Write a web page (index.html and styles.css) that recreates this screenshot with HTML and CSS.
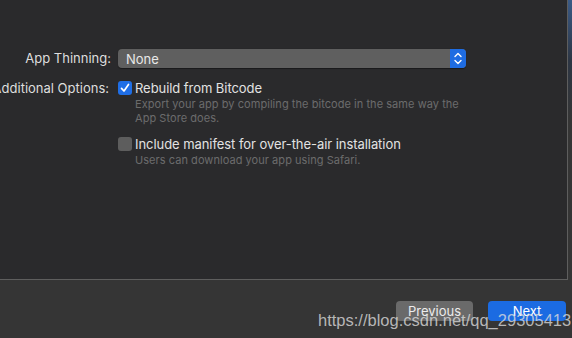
FILE: index.html
```html
<!DOCTYPE html>
<html>
<head>
<meta charset="utf-8">
<link rel="stylesheet" href="styles.css">
</head>
<body>
<div class="window">
  <div class="main">
    <div class="panel">
      <div class="row row-popup">
        <div class="label">App Thinning:</div>
        <div class="popup">
          <span class="popup-text">None</span>
          <span class="stepper">
            <svg width="16" height="19" viewBox="0 0 16 19"><path d="M5 7.5 L8 4.5 L11 7.5 M5 11.5 L8 14.5 L11 11.5" fill="none" stroke="#fff" stroke-width="1.4" stroke-linecap="round" stroke-linejoin="round"/></svg>
          </span>
        </div>
      </div>
      <div class="row row-options">
        <div class="label">Additional Options:</div>
        <div class="options">
          <div class="option">
            <div class="check-line">
              <span class="checkbox checked">
                <svg width="14" height="14" viewBox="0 0 14 14"><path d="M3.5 7.3 L6 10 L10.5 3.5" fill="none" stroke="#fff" stroke-width="1.7" stroke-linecap="round" stroke-linejoin="round"/></svg>
              </span>
              <span class="check-text">Rebuild from Bitcode</span>
            </div>
            <div class="desc">Export your app by compiling the bitcode in the same way the<br>App Store does.</div>
          </div>
          <div class="option">
            <div class="check-line">
              <span class="checkbox"></span>
              <span class="check-text">Include manifest for over-the-air installation</span>
            </div>
            <div class="desc">Users can download your app using Safari.</div>
          </div>
        </div>
      </div>
    </div>
    <div class="edge"></div>
  </div>
  <div class="footer">
    <button class="btn btn-prev">Previous</button>
    <button class="btn btn-next">Next</button>
  </div>
  <div class="watermark">https://blog.csdn.net/qq_29305413</div>
</div>
</body>
</html>
```
FILE: styles.css
```css
html, body {
  margin: 0;
  padding: 0;
  background: #353535;
}
.window {
  position: relative;
  width: 572px;
  height: 338px;
  overflow: hidden;
  font-family: Inter, "Liberation Sans", sans-serif;
  color: #dcdcdc;
}
.main {
  display: flex;
  height: 280px;
}
.panel {
  width: 568px;
  height: 280px;
  box-sizing: border-box;
  background: #2a2a2c;
  border-right: 1px solid #5e5e5e;
  border-bottom: 1px solid #5e5e5e;
  padding-top: 49px;
}
.edge {
  flex: 1;
  background: linear-gradient(#3a5a86, #2d3644 60px, #353535 120px);
}
.row {
  display: flex;
  gap: 7px;
}
.label {
  width: 111px;
  flex: none;
  display: flex;
  justify-content: flex-end;
  white-space: nowrap;
  font-size: 13px;
  line-height: 19px;
  color: #dedede;
}
.row-options {
  margin-top: 12px;
}
.row-options .label {
  line-height: 16px;
  width: 109px;
  margin-right: 2px;
}
.popup {
  width: 348px;
  height: 19px;
  background: #5f5f5f;
  border-radius: 4px;
  display: flex;
  align-items: center;
  justify-content: space-between;
  box-shadow: 0 0.5px 1px rgba(0,0,0,0.4);
}
.popup-text {
  padding-left: 8px;
  font-size: 13px;
  color: #e8e8e8;
}
.stepper {
  width: 16px;
  height: 19px;
  background: #1e6ce2;
  border-radius: 0 4px 4px 0;
  display: flex;
}
.options {
  display: flex;
  flex-direction: column;
  gap: 11px;
}
.check-line {
  display: flex;
  align-items: center;
  gap: 3px;
  height: 16px;
}
.checkbox {
  width: 14px;
  height: 14px;
  border-radius: 3px;
  background: #5d5d5d;
  display: flex;
  box-sizing: border-box;
}
.checkbox.checked {
  background: #1f6ee6;
}
.check-text {
  font-size: 13px;
  letter-spacing: -0.06px;
  color: #e2e2e2;
  white-space: nowrap;
}
.desc {
  padding-top: 1px;
  padding-left: 17px;
  font-size: 11px;
  letter-spacing: 0.05px;
  line-height: 14px;
  color: #6c6c6c;
  white-space: nowrap;
}
.footer {
  display: flex;
  justify-content: flex-end;
  gap: 15px;
  padding-top: 21px;
  padding-right: 6px;
}
.btn {
  height: 20px;
  border: none;
  border-radius: 4px;
  font-family: Inter, "Liberation Sans", sans-serif;
  font-size: 13px;
  color: #ececec;
  padding: 0;
}
.btn-prev {
  width: 77px;
  background: #6a6a6a;
}
.btn-next {
  width: 78px;
  background: #1b6be2;
  color: #fff;
}
.watermark {
  position: absolute;
  left: 318px;
  top: 310px;
  font-family: "Liberation Sans", Arial, sans-serif;
  font-size: 16.5px;
  line-height: 20px;
  color: rgba(220,220,220,0.78);
  white-space: nowrap;
}
```
